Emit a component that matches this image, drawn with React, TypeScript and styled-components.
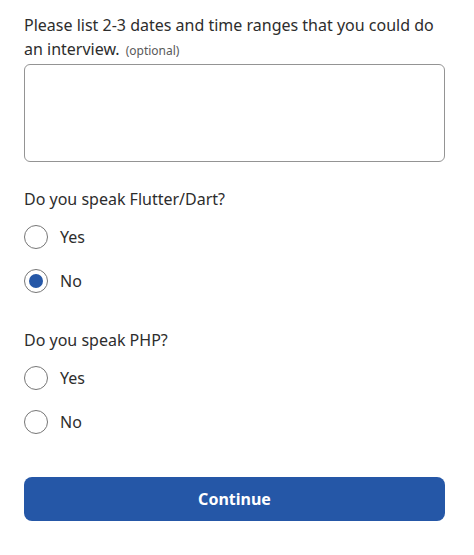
import React, { useState } from "react";
import styled, { createGlobalStyle } from "styled-components";

const Global = createGlobalStyle`
  html, body { margin: 0; padding: 0; background: #fff; }
  body { font-family: "Noto Sans", "Open Sans", sans-serif; color: #2d2d2d; }
  * { box-sizing: border-box; }
`;

const Page = styled.div`
  padding: 13px 29px 0 24px;
  display: flex;
  flex-direction: column;
`;

const Label = styled.label`
  font-size: 16px;
  line-height: 24px;
  color: #2d2d2d;
`;

const Optional = styled.span`
  display: inline-block;
  font-size: 12px;
  line-height: 16px;
  color: #595959;
  margin-left: 6px;
`;

const TextArea = styled.textarea`
  display: block;
  margin-top: 3px;
  width: 100%;
  height: 98px;
  border: 1px solid #949494;
  border-radius: 6px;
  resize: none;
  font-family: inherit;
  font-size: 16px;
  padding: 8px 12px;
  outline: none;
`;

const Fieldset = styled.fieldset`
  border: 0;
  margin: 0;
  padding: 0;
  display: flex;
  flex-direction: column;
`;

const Legend = styled.div`
  font-size: 16px;
  line-height: 24px;
  color: #2d2d2d;
  margin-bottom: 4px;
`;

const Option = styled.label`
  display: flex;
  align-items: center;
  gap: 12px;
  height: 44px;
  font-size: 16px;
  color: #2d2d2d;
  cursor: pointer;
`;

const Circle = styled.span<{ $checked: boolean }>`
  width: 24px;
  height: 24px;
  border-radius: 50%;
  border: 1px solid #767676;
  display: flex;
  align-items: center;
  justify-content: center;
  flex-shrink: 0;
  &::after {
    content: "";
    width: 14px;
    height: 14px;
    border-radius: 50%;
    background: ${(p) => (p.$checked ? "#2557a7" : "transparent")};
  }
`;

const HiddenInput = styled.input`
  position: absolute;
  opacity: 0;
  width: 0;
  height: 0;
`;

const Button = styled.button`
  margin-top: 33px;
  height: 44px;
  width: 100%;
  border: 0;
  border-radius: 8px;
  background: #2557a7;
  color: #fff;
  font-family: inherit;
  font-size: 16px;
  font-weight: 700;
  cursor: pointer;
`;

function RadioGroup({ name, question, value, onChange }: { name: string; question: string; value: string; onChange: (v: string) => void }) {
  return (
    <Fieldset>
      <Legend>{question}</Legend>
      {["Yes", "No"].map((opt) => (
        <Option key={opt}>
          <HiddenInput type="radio" name={name} checked={value === opt} onChange={() => onChange(opt)} />
          <Circle $checked={value === opt} />
          {opt}
        </Option>
      ))}
    </Fieldset>
  );
}

const Section = styled.div<{ $top: number }>`
  margin-top: ${(p) => p.$top}px;
`;

export default function App() {
  const [flutter, setFlutter] = useState("No");
  const [php, setPhp] = useState("");
  return (
    <>
      <Global />
      <Page>
        <Label htmlFor="dates">
          Please list 2-3 dates and time ranges that you could do an interview.<Optional>(optional)</Optional>
        </Label>
        <TextArea id="dates" />
        <Section $top={25}>
          <RadioGroup name="flutter" question="Do you speak Flutter/Dart?" value={flutter} onChange={setFlutter} />
        </Section>
        <Section $top={25}>
          <RadioGroup name="php" question="Do you speak PHP?" value={php} onChange={setPhp} />
        </Section>
        <Button>Continue</Button>
      </Page>
    </>
  );
}
